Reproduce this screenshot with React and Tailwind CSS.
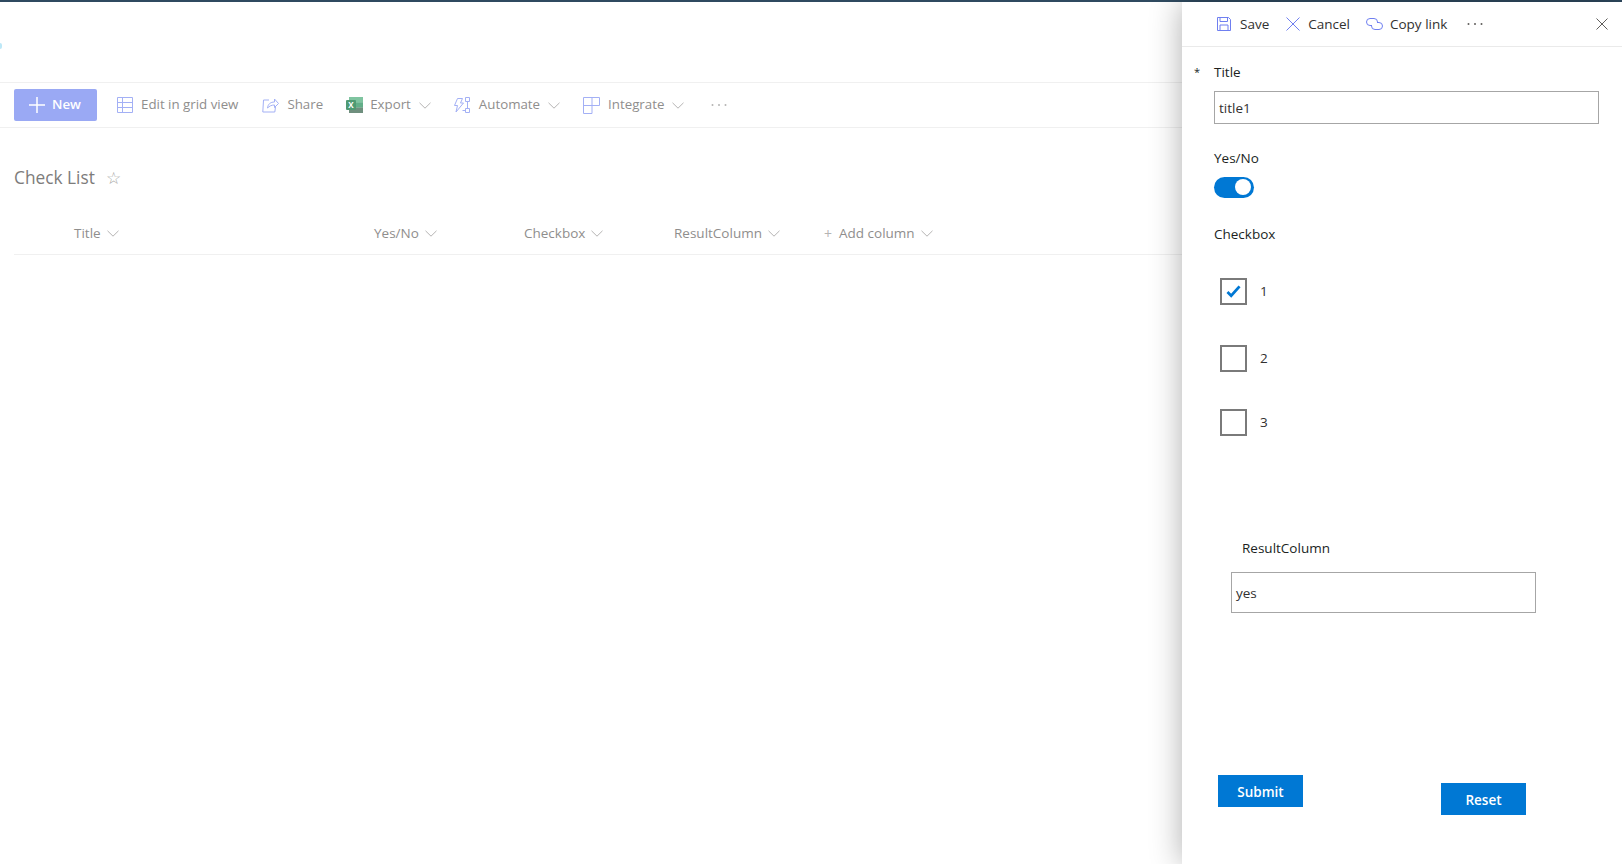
const Chev = ({ className = '' }) => (
  <svg viewBox="0 0 12 7" className={`w-3 h-[7px] ${className}`} fill="none" stroke="#b5b4b3" strokeWidth="1">
    <path d="M.5.8 6 6.2 11.5.8" />
  </svg>
);

const Dots = ({ color }) => (
  <svg viewBox="0 0 16 4" className="w-4 h-1" fill={color}>
    <circle cx="1.5" cy="2" r="1" />
    <circle cx="8" cy="2" r="1" />
    <circle cx="14.5" cy="2" r="1" />
  </svg>
);

const GridIcon = () => (
  <svg viewBox="0 0 16 16" className="w-4 h-4" fill="none" stroke="#a3b0f5" strokeWidth="1">
    <path d="M.5.5h15v15H.5zM.5 5.5h15M.5 10.5h15M5.5.5v15" />
  </svg>
);

const ShareIcon = () => (
  <svg viewBox="0 0 17 16" className="w-[17px] h-4" fill="none" stroke="#a3b0f5" strokeWidth="1">
    <path d="M7 3H1.500L.8 15h12l.7-5" />
    <path d="M5.500 11c.5-4 3-6 7-6V2l4 4.500-4 4V8c-3 0-5 1-7 3z" />
  </svg>
);

const ExcelIcon = () => (
  <svg viewBox="0 0 17 16" className="w-[17px] h-4">
    <rect x="3" y="0" width="14" height="5.5" fill="#7fc4a0" />
    <rect x="3" y="5.3" width="14" height="5.4" fill="#62ae88" />
    <rect x="3" y="10.5" width="14" height="5.5" fill="#6f8f7e" />
    <rect x="0" y="3" width="10" height="10" rx="1" fill="#4f9a73" />
    <text x="5" y="11" textAnchor="middle" fontSize="8" fontWeight="700" fill="#fff" fontFamily="Open Sans, sans-serif">X</text>
  </svg>
);

const AutomateIcon = () => (
  <svg viewBox="0 0 18 16" className="w-[18px] h-4" fill="none" stroke="#a3b0f5" strokeWidth="1">
    <path d="M4.500 1.500h5L7.500 6h3L3 15l1.500-6.500H1.500z" />
    <path d="M12.500.5h4v4h-4zM12.500 11.500h4v4h-4zM14.500 4.500v7M9.500 13.500h3" />
  </svg>
);

const IntegrateIcon = () => (
  <svg viewBox="0 0 17 17" className="w-[17px] h-[17px]" fill="none" stroke="#a3b0f5" strokeWidth="1">
    <path d="M.5.5h16v8H9v8H.5zM.5 8.500H9M9 .5v8" />
  </svg>
);

const SaveIcon = () => (
  <svg viewBox="0 0 14 14" className="w-[14px] h-[14px]" fill="none" stroke="#6f7ff0" strokeWidth="1">
    <path d="M.5.5h11l2 2v11H.5z" />
    <path d="M3 .5v4h7.500v-4M3 13.500V8h8v5.500" />
  </svg>
);

const CancelIcon = () => (
  <svg viewBox="0 0 14 14" className="w-[14px] h-[14px]" fill="none" stroke="#6f7ff0" strokeWidth="1">
    <path d="m.5.5 13 13M13.500.5l-13 13" />
  </svg>
);

const CopyLinkIcon = () => (
  <svg viewBox="0 0 17 12" className="w-[17px] h-3" fill="none" stroke="#6f7ff0" strokeWidth="1">
    <path d="M6 7.500H4a3.500 3.500 0 0 1 0-7h4A3.500 3.500 0 0 1 11.500 4" />
    <path d="M11 4.500h2a3.500 3.500 0 0 1 0 7H9A3.500 3.500 0 0 1 5.500 8" />
  </svg>
);

const CommandItem = ({ icon, label, chevron, className = '', labelClass = 'ml-2' }) => (
  <div className={`flex items-center ${className}`}>
    {icon}
    <span className={labelClass}>{label}</span>
    {chevron && <Chev className="ml-2" />}
  </div>
);

const ColumnHead = ({ label, className = '' }) => (
  <div className={`flex items-center gap-[6px] ${className}`}>
    <span>{label}</span>
    <Chev />
  </div>
);

const CheckRow = ({ label, checked, className = '' }) => (
  <div className={`flex items-center ${className}`}>
    <div className="w-[27px] h-[27px] border-2 border-[#7a7a7a] flex items-center justify-center">
      {checked && (
        <svg viewBox="0 0 16 14" className="w-[15px] h-[13px]" fill="none" stroke="#0078d4" strokeWidth="3">
          <path d="M1.500 7.500 5.500 11.500 14.500 1.500" />
        </svg>
      )}
    </div>
    <span className="ml-[13px] text-[#323130]">{label}</span>
  </div>
);

export default function App() {
  return (
    <div className="h-screen overflow-hidden bg-white flex flex-col text-[13.5px] font-['Open_Sans',sans-serif]">
      <div className="h-[2px] bg-[#2f4a60] shrink-0" />
      <div className="flex flex-1 min-h-0">
        {/* List page behind the panel */}
        <div className="flex-1 min-w-0 text-[#8f8e8d]">
          <div className="h-[80px] flex items-center">
            <div className="w-[2px] h-[6px] rounded-r-full bg-[#bde8f7] mt-2" />
          </div>

          <div className="h-[46px] border-y border-[#f0f0f0] flex items-center text-[13.3px]">
            <div className="ml-[14px] w-[83px] h-8 rounded-[2px] bg-[#9aa9f4] text-white font-semibold flex items-center">
              <svg viewBox="0 0 16 16" className="w-4 h-4 ml-[15px]" stroke="#fff" strokeWidth="1.5">
                <path d="M8 0v16M0 8h16" />
              </svg>
              <span className="ml-[7px]">New</span>
            </div>
            <CommandItem className="ml-5" icon={<GridIcon />} label="Edit in grid view" />
            <CommandItem className="ml-6" icon={<ShareIcon />} label="Share" />
            <CommandItem className="ml-[23px]" labelClass="ml-[7px]" icon={<ExcelIcon />} label="Export" chevron />
            <CommandItem className="ml-[22px]" icon={<AutomateIcon />} label="Automate" chevron />
            <CommandItem className="ml-[23px]" icon={<IntegrateIcon />} label="Integrate" chevron />
            <div className="ml-[27px]">
              <Dots color="#b5b4b3" />
            </div>
          </div>

          <div className="ml-[14px] mt-[38px] flex items-center text-[#7d7c7b]">
            <span className="text-[17.3px] leading-6">Check List</span>
            <span className="ml-[11px] text-[#a8a7a6] text-[17px] leading-6">☆</span>
          </div>

          <div className="ml-[14px] mt-[33px] h-[32px] border-b border-[#f0f0f0] flex items-start">
            <ColumnHead label="Title" className="ml-[60px] w-[300px]" />
            <ColumnHead label="Yes/No" className="w-[150px]" />
            <ColumnHead label="Checkbox" className="w-[150px]" />
            <ColumnHead label="ResultColumn" className="w-[150px]" />
            <div className="flex items-center">
              <span className="text-[14px] text-[#b5b4b3] mr-[7px]">+</span>
              <ColumnHead label="Add column" />
            </div>
          </div>
        </div>

        {/* Edit form panel */}
        <div className="w-[440px] shrink-0 bg-white shadow-[0_0_30px_rgba(0,0,0,0.32)] text-[#323130] relative">
          <div className="h-[45px] border-b border-[#eaeaea] flex items-center">
            <div className="ml-[35px]"><SaveIcon /></div>
            <span className="ml-[9px]">Save</span>
            <div className="ml-[17px]"><CancelIcon /></div>
            <span className="ml-2">Cancel</span>
            <div className="ml-4"><CopyLinkIcon /></div>
            <span className="ml-[7px]">Copy link</span>
            <div className="ml-5"><Dots color="#605e5c" /></div>
            <svg viewBox="0 0 12 12" className="w-3 h-3 ml-auto mr-[14px]" stroke="#605e5c" strokeWidth="1">
              <path d="m.5.5 11 11M11.500.5l-11 11" />
            </svg>
          </div>

          <div className="pl-8">
            <div className="mt-[15px] flex items-center font-medium text-[#201f1e] relative">
              <span className="absolute -left-5 text-[11px] font-normal">*</span>
              <span>Title</span>
            </div>
            <div className="mt-[9px] w-[385px] h-[33px] border border-[#a6a6a6] flex items-center pl-1 pt-[1px]">title1</div>

            <div className="mt-6 font-medium text-[#201f1e]">Yes/No</div>
            <div className="mt-2 w-10 h-[21px] rounded-full bg-[#0078d4] flex items-center justify-end pr-[3px]">
              <div className="w-4 h-4 rounded-full bg-white" />
            </div>

            <div className="mt-[26px] font-medium text-[#201f1e]">Checkbox</div>
            <CheckRow label="1" checked className="ml-[6px] mt-[34px]" />
            <CheckRow label="2" className="ml-[6px] mt-[40px]" />
            <CheckRow label="3" className="ml-[6px] mt-[37px]" />

            <div className="ml-7 mt-[102px] font-medium text-[#201f1e]">ResultColumn</div>
            <div className="ml-[17px] mt-[14px] w-[305px] h-[41px] border border-[#a6a6a6] flex items-center pl-1 pt-[2px]">yes</div>

            <div className="mt-[162px] ml-1 flex items-start">
              <button className="w-[85px] h-8 pt-[2px] bg-[#0078d4] text-white font-semibold">Submit</button>
              <button className="ml-[138px] mt-2 w-[85px] h-8 pt-[2px] bg-[#0078d4] text-white font-semibold">Reset</button>
            </div>
          </div>
        </div>
      </div>
    </div>
  );
}
